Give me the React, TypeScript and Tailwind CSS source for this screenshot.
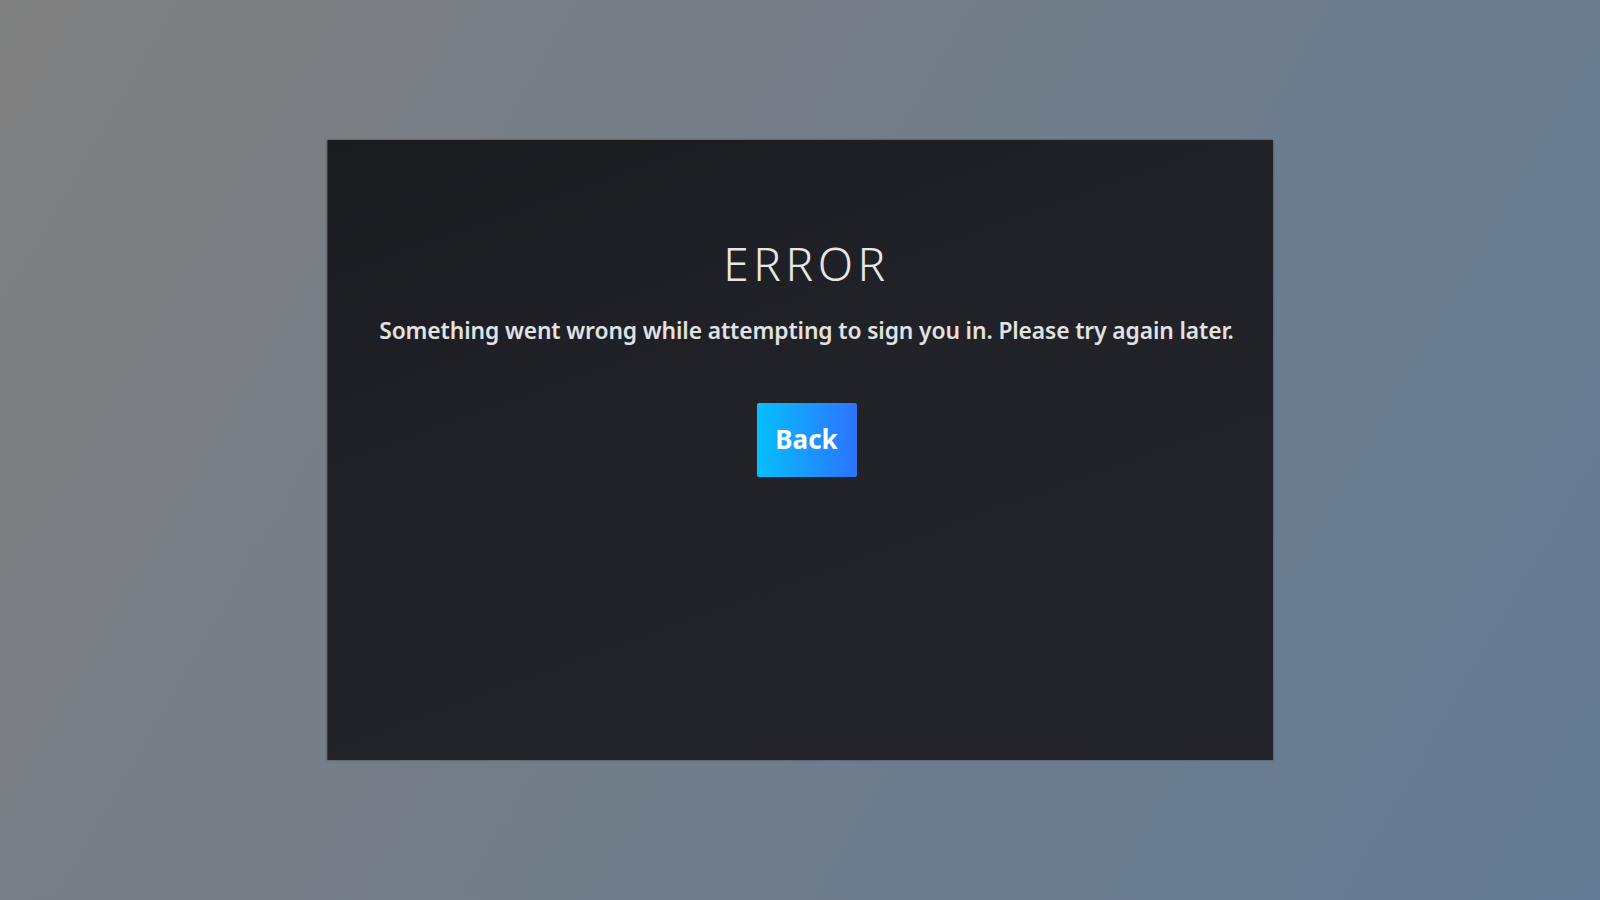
export default function App() {
  return (
    <main className="min-h-screen w-full flex items-start justify-center bg-[linear-gradient(120deg,#808080_0%,#737d88_45%,#637a94_100%)] pt-[140px]">
      {/* sign-in error dialog */}
      <section className="w-[946px] h-[620px] flex flex-col items-center bg-[linear-gradient(160deg,#1a1b1f_0%,#212228_40%,#23252b_100%)] border-l border-[#3a3d44] shadow-[0_0_2px_rgba(0,0,0,0.4)] pt-[100px] pl-[12px] font-['Noto_Sans',sans-serif]">
        <h1 className="text-[46px] leading-none font-light tracking-[0.1em] text-[#e6e6e6]">ERROR</h1>
        <p className="mt-[34px] text-[22.8px] leading-none font-semibold text-[#e2e2e2] tracking-[-0.005em]">
          Something went wrong while attempting to sign you in. Please try again later.
        </p>
        <button className="mt-[60px] w-[100px] h-[74px] rounded-[2px] bg-[linear-gradient(90deg,#06bfff_0%,#2d73ff_100%)] text-white text-[26px] font-bold">
          Back
        </button>
      </section>
    </main>
  );
}
